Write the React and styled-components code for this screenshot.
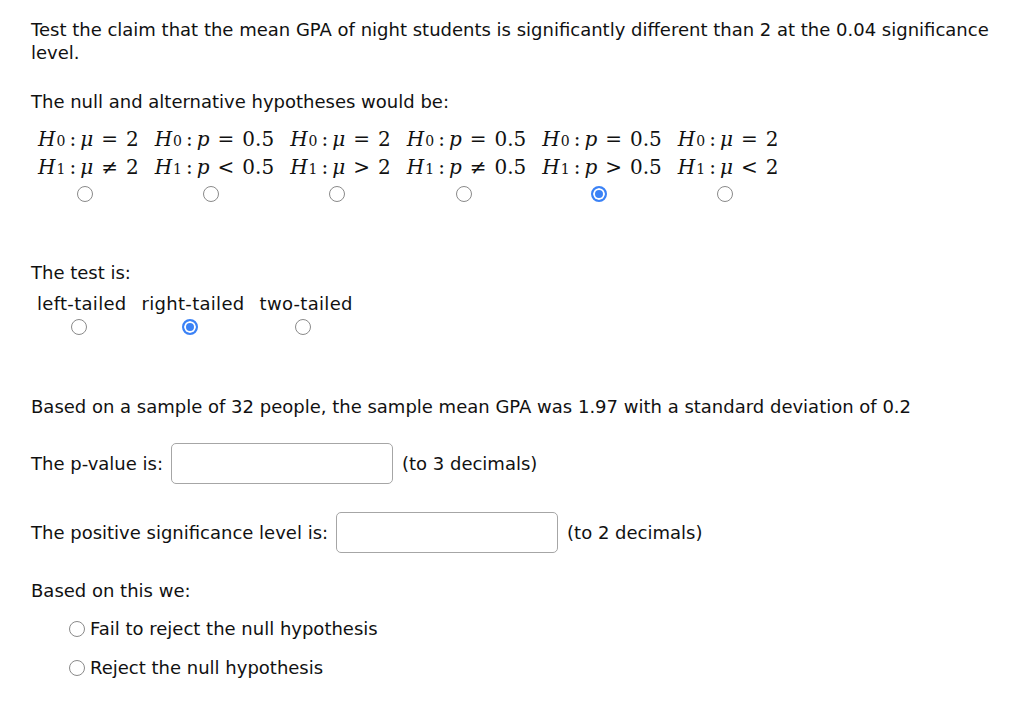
import React from 'react';
import styled, { createGlobalStyle } from 'styled-components';

const GlobalStyle = createGlobalStyle`
  html, body {
    margin: 0;
    padding: 0;
    background: #ffffff;
  }
  body {
    font-family: "DejaVu Sans", Verdana, sans-serif;
    color: #111;
  }
`;

const Page = styled.div`
  padding: 18px 15px 40px 31px;
  font-size: 18px;
  line-height: 23px;
`;

const Para = styled.p`
  margin: ${(p) => p.$top || 0}px 0 0 0;
`;

const HypRow = styled.div`
  display: flex;
  gap: 16px;
  margin: 12px 0 0 7px;
`;

const HypCell = styled.div`
  display: flex;
  flex-direction: column;
  align-items: center;
`;

const MathLine = styled.div`
  font-family: "DejaVu Serif", "Times New Roman", serif;
  font-size: 20px;
  line-height: 28px;
  white-space: nowrap;
  display: flex;
  align-items: baseline;
`;

const Mi = styled.span`
  font-style: italic;
`;

const Sub = styled.sub`
  font-size: 14px;
  vertical-align: -4px;
  line-height: 0;
  margin-left: 1px;
`;

const Colon = styled.span`
  margin: 0 4px;
`;

const Rel = styled.span`
  margin: 0 8px;
`;

const Radio = styled.span`
  display: inline-block;
  box-sizing: border-box;
  width: 16px;
  height: 16px;
  border-radius: 50%;
  border: ${(p) => (p.$checked ? '2px solid #3b82f6' : '1px solid #8a8a8a')};
  background: ${(p) => (p.$checked ? '#3b82f6' : '#fff')};
  box-shadow: ${(p) => (p.$checked ? 'inset 0 0 0 2px #fff' : 'none')};
  flex: none;
`;

const HypRadio = styled(Radio)`
  margin-top: 5px;
  margin-right: 6px;
`;

const TailRow = styled.div`
  display: flex;
  gap: 15px;
  margin: 8px 0 0 6px;
  letter-spacing: 0.3px;
`;

const TailCell = styled.div`
  display: flex;
  flex-direction: column;
  align-items: center;
`;

const TailRadio = styled(Radio)`
  margin-top: 4px;
  margin-right: 6px;
`;

const FieldRow = styled.div`
  display: flex;
  align-items: center;
  margin-top: ${(p) => p.$top}px;
`;

const Input = styled.input`
  box-sizing: border-box;
  width: 222px;
  height: 41px;
  margin: 0 9px 0 8px;
  border: 1px solid #a6a6a6;
  border-radius: 5px;
  font: inherit;
  padding: 0 8px;
  background: #fff;
`;

const ChoiceList = styled.div`
  display: flex;
  flex-direction: column;
  gap: 16px;
  margin: 15px 0 0 38px;
`;

const Choice = styled.label`
  display: flex;
  align-items: center;
  gap: 5px;
`;

function Hyp({ param, op0, op1, value, checked }) {
  return (
    <HypCell>
      <MathLine>
        <Mi>H</Mi><Sub>0</Sub><Colon>:</Colon><Mi>{param}</Mi><Rel>{op0}</Rel>{value}
      </MathLine>
      <MathLine>
        <Mi>H</Mi><Sub>1</Sub><Colon>:</Colon><Mi>{param}</Mi><Rel>{op1}</Rel>{value}
      </MathLine>
      <HypRadio $checked={checked} />
    </HypCell>
  );
}

const hypotheses = [
  { param: 'μ', op1: '≠', value: '2' },
  { param: 'p', op1: '<', value: '0.5' },
  { param: 'μ', op1: '>', value: '2' },
  { param: 'p', op1: '≠', value: '0.5' },
  { param: 'p', op1: '>', value: '0.5', checked: true },
  { param: 'μ', op1: '<', value: '2' },
];

const tails = [
  { label: 'left-tailed' },
  { label: 'right-tailed', checked: true },
  { label: 'two-tailed' },
];

export default function App() {
  return (
    <>
      <GlobalStyle />
      <Page>
        <Para>
          Test the claim that the mean GPA of night students is significantly different than 2 at the 0.04 significance level.
        </Para>
        <Para $top={26}>The null and alternative hypotheses would be:</Para>
        <HypRow>
          {hypotheses.map((h, i) => (
            <Hyp key={i} param={h.param} op0="=" op1={h.op1} value={h.value} checked={h.checked} />
          ))}
        </HypRow>

        <Para $top={59}>The test is:</Para>
        <TailRow>
          {tails.map((t) => (
            <TailCell key={t.label}>
              <span>{t.label}</span>
              <TailRadio $checked={t.checked} />
            </TailCell>
          ))}
        </TailRow>

        <Para $top={60}>
          Based on a sample of 32 people, the sample mean GPA was 1.97 with a standard deviation of 0.2
        </Para>

        <FieldRow $top={25}>
          The p-value is:<Input type="text" />(to 3 decimals)
        </FieldRow>
        <FieldRow $top={28}>
          The positive significance level is:<Input type="text" />(to 2 decimals)
        </FieldRow>

        <Para $top={26}>Based on this we:</Para>
        <ChoiceList>
          <Choice><Radio />Fail to reject the null hypothesis</Choice>
          <Choice><Radio />Reject the null hypothesis</Choice>
        </ChoiceList>
      </Page>
    </>
  );
}
